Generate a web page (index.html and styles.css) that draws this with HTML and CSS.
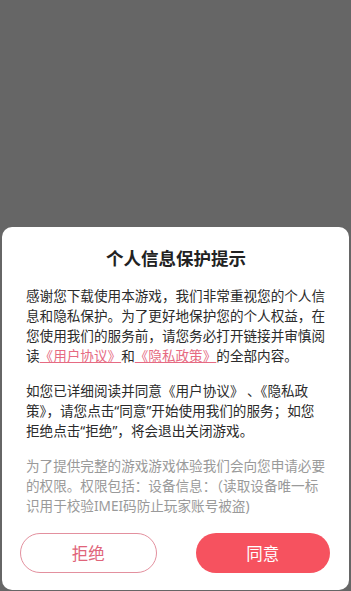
FILE: index.html
```html
<!DOCTYPE html>
<html lang="zh-CN">
<head>
    <meta charset="UTF-8">
    <meta name="viewport" content="width=device-width, initial-scale=1.0">
    <title>个人信息保护提示</title>
    <link rel="stylesheet" href="styles.css">
</head>
<body>

<div class="overlay">
    <div class="dialog">
        <h1 class="dialog-title">个人信息保护提示</h1>

        <p class="dialog-text">感谢您下载使用本游戏，我们非常重视您的个人信息和隐私保护。为了更好地保护您的个人权益，在您使用我们的服务前，请您务必打开链接并审慎阅读<a href="#" class="link">《用户协议》</a>和<a href="#" class="link">《隐私政策》</a>的全部内容。</p>

        <p class="dialog-text">如您已详细阅读并同意《用户协议》 、《隐私政策》，请您点击“同意”开始使用我们的服务；如您拒绝点击“拒绝”，将会退出关闭游戏。</p>

        <p class="dialog-text dialog-note">为了提供完整的游戏游戏体验我们会向您申请必要的权限。权限包括：设备信息：（读取设备唯一标识用于校验IMEI码防止玩家账号被盗)</p>

        <!-- 按钮 -->
        <div class="dialog-buttons">
            <button class="button-refuse">拒绝</button>
            <button class="button-agree">同意</button>
        </div>
    </div>
</div>

</body>
</html>
```

FILE: styles.css
```css
* {
    margin: 0;
    padding: 0;
    box-sizing: border-box;
}

body {
    font-family: "Noto Sans", "Noto Sans CJK SC", sans-serif;
    background-color: #666666;
    height: 591px;
    overflow: hidden;
}

.overlay {
    height: 100%;
    display: flex;
    flex-direction: column;
    justify-content: flex-end;
    padding: 0 2px 1px;
}

.dialog {
    background-color: #ffffff;
    border-radius: 10px;
    padding: 19px 23px 17px 24px;
}

.dialog-title {
    font-size: 17.5px;
    line-height: 24px;
    font-weight: bold;
    color: #222222;
    text-align: center;
    margin-bottom: 16px;
}

.dialog-text {
    font-size: 13.6px;
    line-height: 20px;
    color: #2b2b2b;
    margin-bottom: 15px;
}

.dialog-note {
    color: #9a9a9a;
    margin-bottom: 17px;
}

.link {
    color: #e66a82;
    text-decoration: underline;
}

.dialog-buttons {
    display: flex;
    gap: 39px;
    margin: 0 -4px 0 -6px;
}

.dialog-buttons button {
    flex: 1;
    height: 40px;
    border-radius: 20px;
    font-family: inherit;
    font-size: 16.5px;
    cursor: pointer;
}

.button-refuse {
    background-color: #ffffff;
    border: 1px solid #e3909e;
    color: #e0647a;
}

.button-agree {
    background-color: #f6525f;
    border: none;
    color: #ffffff;
}
```
